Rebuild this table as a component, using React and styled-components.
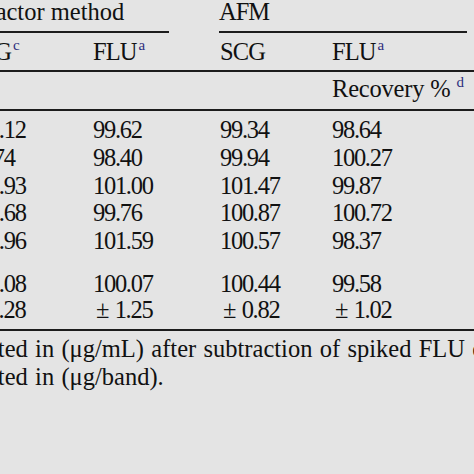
import React from "react";
import styled, { createGlobalStyle } from "styled-components";

const GlobalStyle = createGlobalStyle`
  html, body {
    margin: 0;
    padding: 0;
    background: #e4e4e4;
    overflow: hidden;
  }
  body {
    font-family: "Liberation Serif", "Times New Roman", serif;
    color: #111;
  }
`;

const Page = styled.div`
  width: 474px;
  height: 474px;
  overflow: hidden;
`;

// the table is cropped on the left, so it starts a bit off the page
const Table = styled.div`
  width: 508px;
  margin-left: -34px;
`;

const Row = styled.div`
  display: grid;
  grid-template-columns: 127px 127px 112px 142px;
  padding: ${(p) => p.$pad || "0"};
  border-bottom: ${(p) => (p.$rule ? "2px solid #1c1c1c" : "none")};
`;

const Body = styled.div`
  padding-top: 5px;
`;

const GroupCell = styled.div`
  grid-column: span 2;
  margin: 0 ${(p) => p.$mr || 0}px 0 ${(p) => p.$ml || 0}px;
  padding: 0 0 7px ${(p) => p.$indent || 0}px;
  border-bottom: 2px solid #1c1c1c;
  font-size: 24.5px;
  letter-spacing: ${(p) => p.$ls || "0"};
  line-height: 24px;
  white-space: nowrap;
`;

const Cell = styled.div`
  grid-column: ${(p) => (p.$start ? `${p.$start} / span 1` : "auto")};
  font-size: 24.5px;
  letter-spacing: ${(p) => (p.$num ? "-1.3px" : p.$ls || "-0.9px")};
  line-height: ${(p) => p.$lh || "28px"};
  white-space: nowrap;
`;

const Sup = styled.span`
  font-size: 15px;
  letter-spacing: 0;
  color: #2c2c7c;
  vertical-align: 10px;
  line-height: 0;
  margin-left: ${(p) => p.$gap || 2}px;
`;

const Pm = styled.span`
  display: inline-block;
  margin: 0 6.5px 0 3px;
`;

const Gap = styled.div`
  height: ${(p) => p.$h}px;
`;

const Notes = styled.div`
  margin-left: -77px;
  padding-top: 4px;
`;

const Note = styled.p`
  margin: 0;
  font-size: 24.5px;
  word-spacing: 1.2px;
  line-height: 28px;
  white-space: nowrap;
`;

const rows = [
  ["100.12", "99.62", "99.34", "98.64"],
  ["99.74", "98.40", "99.94", "100.27"],
  ["101.93", "101.00", "101.47", "99.87"],
  ["100.68", "99.76", "100.87", "100.72"],
  ["100.96", "101.59", "100.57", "98.37"],
];

const mean = ["100.08", "100.07", "100.44", "99.58"];
const sd = ["1.28", "1.25", "0.82", "1.02"];

export default function App() {
  return (
    <Page>
      <GlobalStyle />
      <Table>
        <Row>
          <GroupCell $indent={16} $mr={51}>
            Factor method
          </GroupCell>
          <GroupCell $ml={-1} $mr={7} $ls="-1px">
            AFM
          </GroupCell>
        </Row>

        <Row $pad="5px 0 4px" $rule>
          <Cell>
            SCG<Sup>c</Sup>
          </Cell>
          <Cell>
            FLU<Sup>a</Sup>
          </Cell>
          <Cell>SCG</Cell>
          <Cell>
            FLU<Sup>a</Sup>
          </Cell>
        </Row>

        <Row $pad="3px 0 6px" $rule>
          <Cell $start={4} $ls="-0.2px">
            Recovery %<Sup $gap={6}>d</Sup>
          </Cell>
        </Row>

        <Body>
          {rows.map((r, i) => (
            <Row key={i}>
              {r.map((v, j) => (
                <Cell key={j} $num $lh="27.75px">
                  {v}
                </Cell>
              ))}
            </Row>
          ))}
        </Body>

        <Gap $h={16} />

        <Row $pad="0 0 6px" $rule>
          {mean.map((v, j) => (
            <Cell key={"m" + j} $num $lh="26px">
              {v}
            </Cell>
          ))}
          {sd.map((v, j) => (
            <Cell key={"s" + j} $num $lh="26px">
              <Pm>±</Pm>
              {v}
            </Cell>
          ))}
        </Row>
      </Table>

      <Notes>
        <Note>
          Calculated in (μg/mL) after subtraction of spiked FLU concentration.
        </Note>
        <Note>Calculated in (μg/band).</Note>
      </Notes>
    </Page>
  );
}
